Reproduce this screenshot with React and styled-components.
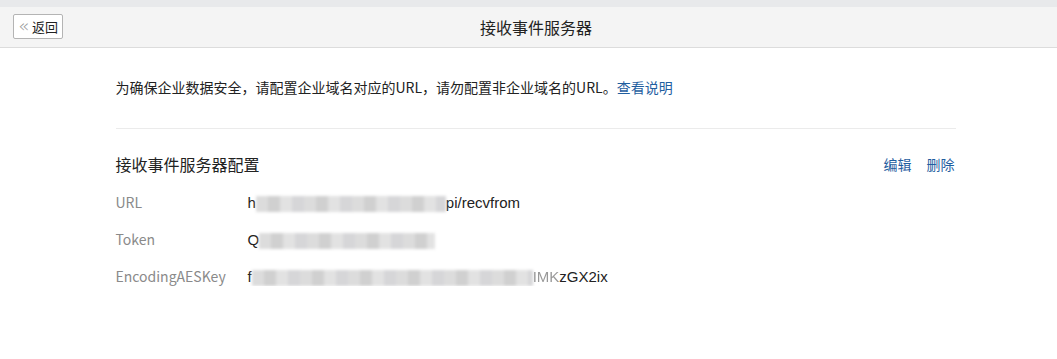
import styled, { createGlobalStyle } from 'styled-components';

const Global = createGlobalStyle`
    html, body {
        margin: 0;
        padding: 0;
        background: #FFFFFF;
        font-family: "Microsoft YaHei", "Noto Sans CJK SC", "Liberation Sans", sans-serif;
        color: #222222;
    }
`

const rows = [
    { label: 'URL', pre: 'h', blur: 190, post: 'pi/recvfrom' },
    { label: 'Token', pre: 'Q', blur: 176, post: '' },
    { label: 'EncodingAESKey', pre: 'f', blur: 281, post: 'zGX2ix', faint: 'IMK' },
]

export default function App() {
    return (
        <>
            <Global />
            <TopStrip />
            <Header>
                <Voltar>
                    <Chevron>«</Chevron>返回
                </Voltar>
                <Titulo>接收事件服务器</Titulo>
            </Header>
            <Conteudo>
                <Aviso>
                    为确保企业数据安全，请配置企业域名对应的URL，请勿配置非企业域名的URL。<Link>查看说明</Link>
                </Aviso>
                <Divisor />
                <Secao>
                    <SecaoTitulo>接收事件服务器配置</SecaoTitulo>
                    <Acoes>
                        <Link>编辑</Link>
                        <Link>删除</Link>
                    </Acoes>
                </Secao>
                <Lista>
                    {rows.map(r => (
                        <Linha key={r.label}>
                            <Rotulo>{r.label}</Rotulo>
                            <Valor>
                                {r.pre}
                                <Borrado style={{ width: r.blur }} />
                                {r.faint && <Fraco>{r.faint}</Fraco>}
                                {r.post}
                            </Valor>
                        </Linha>
                    ))}
                </Lista>
            </Conteudo>
        </>
    )
}

const TopStrip = styled.div`
    height: 7px;
    background: #E8E9EB;
`

const Header = styled.div`
    position: relative;
    height: 40px;
    background: #F4F4F4;
    border-bottom: 1px solid #DCDCDC;
    display: flex;
    align-items: center;
    justify-content: center;
`

const Voltar = styled.div`
    position: absolute;
    left: 13px;
    top: 7px;
    width: 50px;
    height: 25px;
    box-sizing: border-box;
    border: 1px solid #B4B4B4;
    border-radius: 2px;
    background: #FFFFFF;
    display: flex;
    align-items: center;
    justify-content: center;
    font-size: 13px;
    color: #222222;
`

const Chevron = styled.span`
    color: #999999;
    font-size: 18px;
    line-height: 16px;
    margin-right: 3px;
    margin-top: -2px;
    font-family: "DejaVu Sans", sans-serif;
    font-weight: 300;
`

const Titulo = styled.div`
    font-size: 16px;
    color: #222222;
    margin-left: 15px;
`

const Conteudo = styled.div`
    width: 840px;
    margin: 0 auto;
    padding-left: 14px;
`

const Aviso = styled.p`
    margin: 0;
    padding-top: 29px;
    height: 20px;
    line-height: 20px;
    font-size: 14px;
    color: #222222;
`

const Link = styled.span`
    color: #1F5E9F;
    font-size: 14px;
`

const Divisor = styled.div`
    margin-top: 31px;
    height: 1px;
    background: #EBEBEB;
`

const Secao = styled.div`
    display: flex;
    justify-content: space-between;
    align-items: center;
    margin-top: 24px;
    height: 22px;
`

const SecaoTitulo = styled.div`
    font-size: 16px;
    color: #222222;
`

const Acoes = styled.div`
    display: flex;
    gap: 15px;
    margin-right: 1px;
`

const Lista = styled.div`
    display: flex;
    flex-direction: column;
    margin-top: 17px;
    gap: 17px;
`

const Linha = styled.div`
    display: flex;
    align-items: center;
    height: 20px;
    font-size: 14px;
`

const Rotulo = styled.div`
    width: 132px;
    color: #8A8A8A;
`

const Valor = styled.div`
    display: flex;
    align-items: center;
    color: #222222;
    font-family: "Liberation Sans", "Noto Sans CJK SC", sans-serif;
    font-size: 15px;
`

const Borrado = styled.span`
    display: inline-block;
    height: 16px;
    margin-top: 4px;
    background: repeating-linear-gradient(90deg, #DCDCDC 0 12px, #D0D0D0 12px 24px, #E2E2E2 24px 36px, #D6D6D8 36px 48px);
    filter: blur(1.5px);
`

const Fraco = styled.span`
    color: #555555;
    opacity: 0.6;
`
